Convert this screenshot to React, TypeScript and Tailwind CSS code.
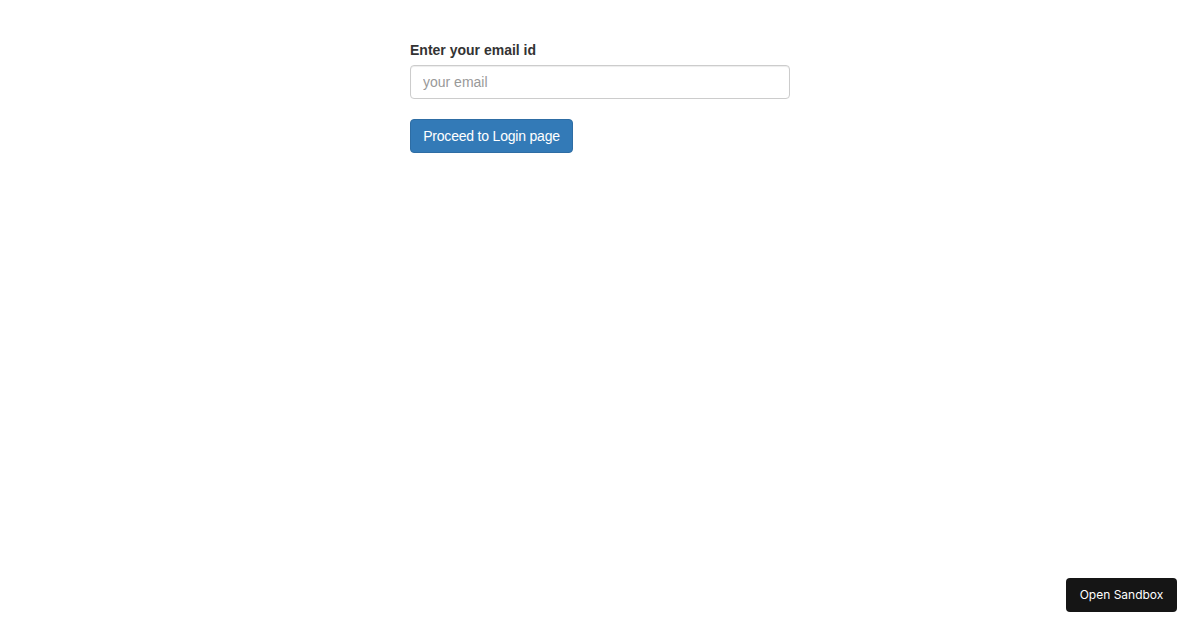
import React from "react";

export default function App() {
  return (
    <div className="min-h-[630px] w-full bg-white" style={{ fontFamily: '"Liberation Sans", Arial, sans-serif' }}>
      <div className="mx-auto w-[380px] pt-[40px]">
        <label className="mb-[5px] block text-[14px] font-bold leading-[20px] text-[#333333]">Enter your email id</label>
        <input
          type="email"
          placeholder="your email"
          className="block h-[34px] w-full rounded-[4px] border border-[#cccccc] px-[12px] py-[6px] text-[14px] leading-[20px] text-[#555555] shadow-[inset_0_1px_1px_rgba(0,0,0,0.075)] outline-none placeholder:text-[#999999]"
        />
        <button className="mt-[20px] h-[34px] w-[163px] whitespace-nowrap rounded-[4px] border border-[#2e6da4] bg-[#337ab7] px-0 py-[6px] text-[14px] leading-[20px] tracking-[-0.2px] text-white">
          Proceed to Login page
        </button>
      </div>
      <div
        className="fixed bottom-[18px] right-[23px] flex h-[34px] w-[111px] items-center justify-center rounded-[4px] bg-[#151515] text-[12px] text-white"
        style={{ fontFamily: 'Inter, "Liberation Sans", sans-serif' }}
      >
        Open Sandbox
      </div>
    </div>
  );
}
